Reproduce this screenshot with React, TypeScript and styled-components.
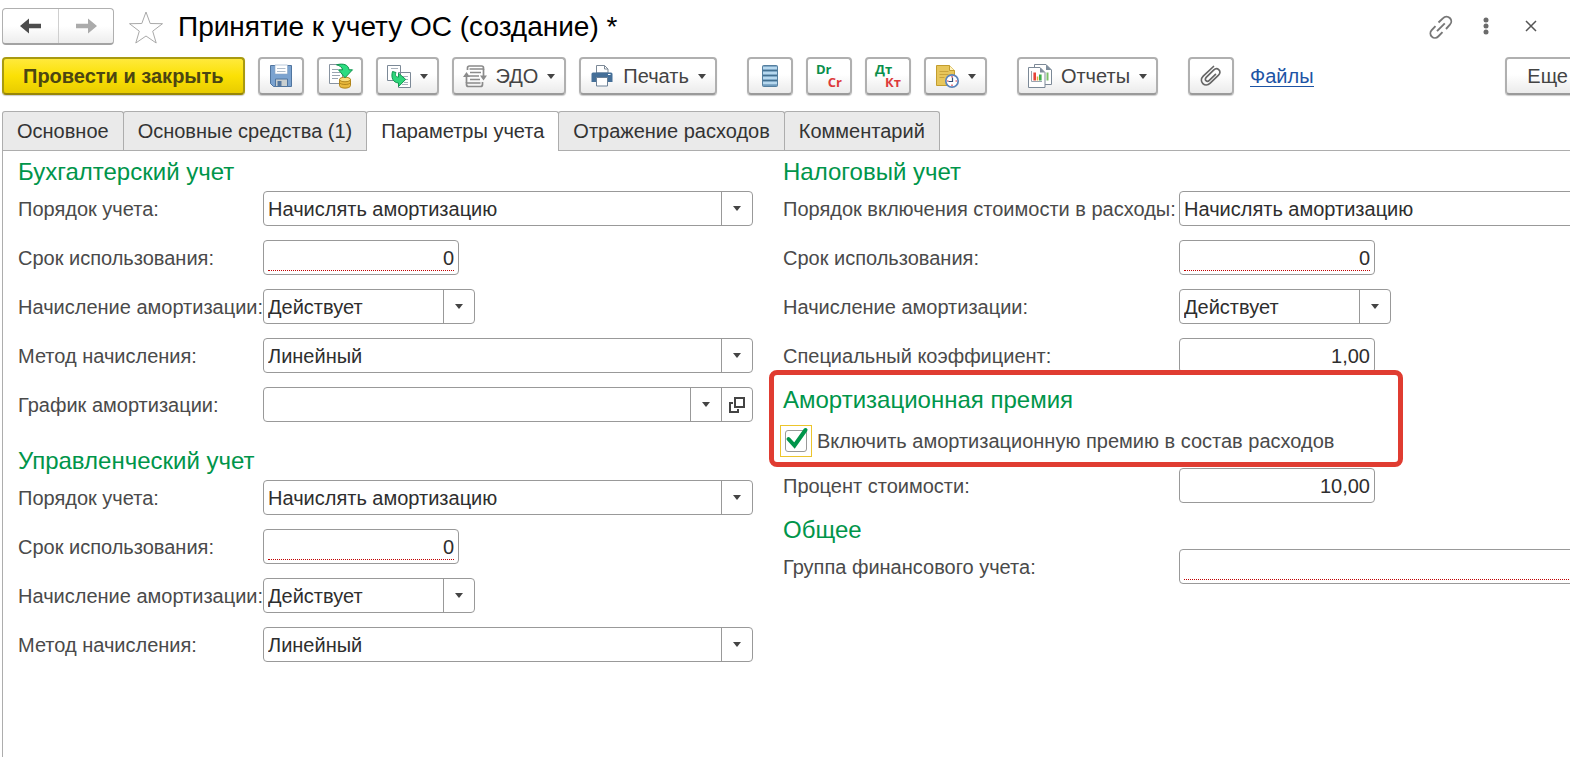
import React, { useState } from "react";
import styled, { createGlobalStyle } from "styled-components";

const GlobalStyle = createGlobalStyle`
  *, *::before, *::after { box-sizing: border-box; }
  body {
    margin: 0;
    background: #fff;
    overflow-x: hidden;
  }
  body, button, input, select {
    font-family: "Liberation Sans", Arial, sans-serif;
    font-size: 20px;
    line-height: 24px;
    color: #2e2e2e;
  }
`;

const Page = styled.div`
  display: flex;
  flex-direction: column;
  min-height: 100vh;
  padding: 8px 0 0 2px;
  overflow: hidden;
`;

/* ---------- title bar ---------- */

const TitleBar = styled.header`
  display: flex;
  align-items: center;
  height: 37px;
  padding-right: 17px;
`;

const NavGroup = styled.div`
  display: flex;
  height: 37px;
  border: 1px solid #b0b0b0;
  border-bottom: 2px solid #a3a3a3;
  border-radius: 4px;
  background: linear-gradient(#fff 50%, #ededed);
`;

const NavButton = styled.button`
  display: flex;
  align-items: center;
  justify-content: center;
  width: 55px;
  padding: 0;
  border: 0;
  background: none;

  & + & {
    border-left: 1px solid #cfcfcf;
  }
`;

const PlainButton = styled.button`
  display: flex;
  align-items: center;
  justify-content: center;
  width: 45px;
  height: 36px;
  padding: 0;
  border: 0;
  background: none;
`;

const StarButton = styled(PlainButton)`
  width: 36px;
  margin: 0 14px;
`;

const Title = styled.h1`
  flex: 1;
  margin: 0;
  font-size: 28px;
  line-height: 36px;
  font-weight: 400;
  color: #000;
  white-space: nowrap;
`;

const WindowTools = styled.div`
  display: flex;
`;

/* ---------- command bar ---------- */

const Toolbar = styled.div`
  display: flex;
  align-items: center;
  gap: 13px;
  margin: 12px -20px 0 0;
`;

const ToolGroup = styled.div`
  display: flex;
  align-items: center;
  gap: 13px;

  & + & {
    margin-left: 17px;
  }
`;

const ToolButton = styled.button<{ $square?: boolean }>`
  display: flex;
  align-items: center;
  justify-content: center;
  gap: 9px;
  height: 38px;
  width: ${(p) => (p.$square ? "46px" : "auto")};
  padding: ${(p) => (p.$square ? "0" : "0 9px")};
  border: 2px solid #b0b0b0;
  border-bottom-color: #9a9a9a;
  border-radius: 4px;
  background: linear-gradient(#fff 45%, #ebebeb);
  box-shadow: 0 1px 1px #ccc;
  color: #444;
  white-space: nowrap;
`;

const PrimaryButton = styled(ToolButton)`
  padding: 0 19px;
  border-color: #a89a10;
  border-bottom-color: #978608;
  background: linear-gradient(#ffe93b, #fbe105 50%, #e8cc00);
  color: #4c4612;
  font-weight: 700;
`;

const MoreButton = styled(ToolButton)`
  margin-left: auto;
  padding: 0 3px 0 20px;
`;

const FilesLink = styled.a`
  margin-left: 3px;
  color: #1d54a5;
  text-decoration: none;
  border-bottom: 1px solid #1d54a5;
  line-height: 20px;
`;

/* ---------- tabs ---------- */

const TabList = styled.div`
  display: flex;
  margin-top: 16px;
  border-bottom: 1px solid #adadad;
`;

const Tab = styled.button<{ $active?: boolean }>`
  height: ${(p) => (p.$active ? "40px" : "39px")};
  margin: 0 0 ${(p) => (p.$active ? "-1px" : "0")} -1px;
  padding: 0 14px ${(p) => (p.$active ? "1px" : "0")};
  border: 1px solid #adadad;
  border-bottom: 0;
  border-radius: 3px 3px 0 0;
  background: ${(p) => (p.$active ? "#fff" : "#eaeaea")};
  color: #333;
  white-space: nowrap;

  &:first-child {
    margin-left: 0;
  }
`;

/* ---------- form ---------- */

const Panel = styled.main`
  flex: 1;
  display: flex;
  gap: 30px;
  margin-right: -40px;
  padding: 6px 0 24px 15px;
  border-left: 1px solid #adadad;
`;

const Column = styled.div<{ $basis: number; $label: number }>`
  --label: ${(p) => p.$label}px;
  flex: 1 1 ${(p) => p.$basis}px;
  min-width: 0;
`;

const Section = styled.section<{ $gap?: number }>`
  display: flex;
  flex-direction: column;
  gap: 14px;
  margin-top: ${(p) => p.$gap ?? 0}px;
`;

const Heading = styled.h2`
  margin: 0 0 -10px;
  font-size: 24px;
  line-height: 30px;
  font-weight: 400;
  color: #00954a;
`;

const Row = styled.div`
  display: grid;
  grid-template-columns: var(--label) minmax(0, 1fr);
  align-items: center;
`;

const Label = styled.label`
  color: #4a4a4a;
  white-space: nowrap;
`;

const widths = { number: "196px", short: "212px", full: "100%" };

const FieldBox = styled.div<{ $size: keyof typeof widths }>`
  display: flex;
  width: ${(p) => widths[p.$size]};
  height: 35px;
  border: 1px solid #999;
  border-radius: 4px;
  background: #fff;
  overflow: hidden;
`;

const Select = styled.select`
  flex: 1;
  min-width: 0;
  padding: 0 4px;
  border: 0;
  appearance: none;
  background: none;
  outline: none;
`;

const TextInput = styled.input<{ $required?: boolean; $right?: boolean }>`
  flex: 1;
  min-width: 0;
  margin: 0 4px 3px;
  padding: 5px 0 0;
  border: 0;
  border-bottom: 1px ${(p) => (p.$required ? "dotted #c00000" : "solid transparent")};
  text-align: ${(p) => (p.$right ? "right" : "left")};
  background: none;
  outline: none;
`;

const FieldButton = styled.button`
  display: flex;
  align-items: center;
  justify-content: center;
  width: 31px;
  padding: 0;
  border: 0;
  border-left: 1px solid #999;
  background: none;
`;

const Premium = styled(Section)`
  position: relative;

  &::after {
    content: "";
    position: absolute;
    inset: -15px auto -10px -14px;
    width: 634px;
    border: 5px solid #e03c31;
    border-radius: 8px;
    pointer-events: none;
  }
`;

const CheckLabel = styled.label`
  display: flex;
  align-items: center;
  gap: 5px;
  margin: 6px 0 0 -3px;
  color: #4a4a4a;
  white-space: nowrap;
`;

const CheckFrame = styled.span`
  display: grid;
  place-items: center;
  width: 32px;
  height: 32px;
  border: 1px solid #ecc52c;

  & > * {
    grid-area: 1 / 1;
  }
  input:not(:checked) + svg {
    visibility: hidden;
  }
`;

const Checkbox = styled.input`
  width: 22px;
  height: 22px;
  margin: 0;
  appearance: none;
  border: 1px solid #999;
  border-radius: 3px;
  background: #fff;
`;

/* ---------- icons ---------- */

const Drawing = styled.svg`
  flex: none;
  overflow: visible;
`;

const Svg = ({ w = 24, h = 24, children }: { w?: number; h?: number; children: React.ReactNode }) => (
  <Drawing width={w} height={h} viewBox={`0 0 ${w} ${h}`} fill="none" aria-hidden="true">
    {children}
  </Drawing>
);

const Caret = () => (
  <Svg w={8} h={5}>
    <path d="M0 0h8L4 5z" fill="#444" />
  </Svg>
);

const ArrowIcon = ({ forward }: { forward?: boolean }) => (
  <Svg w={22} h={16}>
    {forward ? (
      <path d="M22 8 13 0.5V5.8H1v4.4h12v5.3z" fill="#ababab" />
    ) : (
      <path d="M0 8 9 0.5V5.8h12v4.4H9v5.3z" fill="#4d4d4d" />
    )}
  </Svg>
);

const StarIcon = () => (
  <Svg w={36} h={34}>
    <path d="M18 2l4.2 11.5 12.300.2-9.800 7.500 3.500 11.800L18 26 7.800 33l3.500-11.800L1.500 13.700l12.300-.2z" stroke="#a9a9a9" />
  </Svg>
);

const LinkIcon = () => (
  <Svg>
    <g stroke="#777" strokeWidth="1.9">
      <path d="M9.500 7.500l4.600-4.400a4.700 4.700 0 0 1 6.800 6.600l-3.900 4.300" />
      <path d="M6.500 11.200l-3.800 4a4.500 4.500 0 0 0 6.500 6.300l4.300-4.300" />
      <path d="M8 16.200l7.800-7.900" />
    </g>
  </Svg>
);

const DotsIcon = () => (
  <Svg w={6} h={18}>
    <circle cx="3" cy="2" r="2.5" fill="#6b6b6b" />
    <circle cx="3" cy="8" r="2.5" fill="#6b6b6b" />
    <circle cx="3" cy="14" r="2.5" fill="#6b6b6b" />
  </Svg>
);

const CloseIcon = () => (
  <Svg w={12} h={12}>
    <path d="M1 0l10 10M11 0L1 10" stroke="#555" strokeWidth="1.5" />
  </Svg>
);

const SaveIcon = () => (
  <Svg>
    <path d="M1.500 1.500h21v21H4.500l-3-3z" fill="#7ba3d0" stroke="#50759f" />
    <path d="M6 1h12.500v9H6z" fill="#fff" stroke="#8aa6c4" strokeWidth=".6" />
    <path d="M8 4.500h8.500M8 7.500h8.500" stroke="#aebccb" />
    <path d="M6.500 15h12v7.500h-12z" fill="#c9cfd0" stroke="#50759f" />
    <path d="M8.500 17h4v5h-4z" fill="#56789f" />
  </Svg>
);

const PostIcon = () => (
  <Svg w={26} h={26}>
    <path d="M2.500 1.500h13v19h-13z" fill="#fff" stroke="#8893a0" />
    <path d="M5 6.500h6M5 9.500h8M5 12.500h8M5 15.500h6" stroke="#9aa5b0" />
    <path d="M12.500 16.500v6c0 3.500 11 3.500 11 0v-6z" fill="#e9b93c" stroke="#b0841a" />
    <path d="M12.500 19.500c1 2.600 10 2.600 11 0" stroke="#b0841a" />
    <ellipse cx="18" cy="16.500" rx="5.500" ry="2.300" fill="#f8de7c" stroke="#b0841a" />
    <path d="M9.500 1.800c7-1.800 12 0 12.500 5h3.500l-7.500 8-6.500-8h4c-.3-2.600-2.500-4-6-5z" fill="#2bdc80" stroke="#11924e" />
  </Svg>
);

const CopyIcon = () => (
  <Svg>
    <path d="M.5 1.500h13v15H.5zM11.500 8.500h12v15h-12z" fill="#fff" stroke="#7c8997" />
    <path d="M4 4.500h7M15 12.500h6M17 15.500h4M17 18.500h4M15 20.500h6" stroke="#a8b1bb" />
    <path d="M5.500 7.500c-1.800 6.500.7 11 6 11.500v3.600l7.200-7.200-7.200-6.200v3.900c-3-.2-3.600-2-2.500-4.600z" fill="#2fd67b" stroke="#129550" strokeLinejoin="round" />
  </Svg>
);

const EdoIcon = () => (
  <Svg>
    <g stroke="#8b8b8b" strokeWidth="1.7">
      <path d="M4.500 6V4q0-2 2-2h12q2 0 2 2v1h-14" />
      <path d="M19.500 18v2.500q0 2-2 2h-12q-2 0-2-2V19h14" />
      <path d="M7 8.500h11M6 12h10M7 15.500h10" />
      <path d="M3.500 19v-7M20.500 5v8" />
    </g>
    <path d="M0 13l3.500-5L7 13zM17 11.500h7l-3.500 5z" fill="#8b8b8b" />
  </Svg>
);

const PrintIcon = () => (
  <Svg>
    <path d="M6.500 9V1.500h8l3.500 3.500v4z" fill="#fff" stroke="#7c8997" />
    <path d="M14.500 1.500V5H18" stroke="#7c8997" />
    <path d="M3 8.500h18q1.500 0 1.500 1.500v8h-21v-8q0-1.500 1.500-1.500z" fill="#456f98" />
    <path d="M18 10.500h2.500" stroke="#fff" />
    <path d="M6.500 13.500h11v8.500h-11z" fill="#fff" stroke="#6c8197" />
  </Svg>
);

const ListIcon = () => (
  <Svg w={16} h={22}>
    <rect x=".5" y=".5" width="15" height="21" rx="1" fill="#6f9bbd" stroke="#557f9f" />
    <path d="M1 3h14M1 8h14M1 13h14M1 18h14" stroke="#b7d8ee" strokeWidth="2.500" />
    <path d="M1 5.500h14M1 10.500h14M1 15.500h14" stroke="#44708f" />
  </Svg>
);

const PairIcon = ({ top, bottom }: { top: string; bottom: string }) => (
  <Svg w={26} h={26}>
    <g fontFamily="'Open Sans', sans-serif" fontWeight="700" fontSize="13">
      <text x="0" y="11" fill="#0a8f4c">{top}</text>
      <text x="26" y="24" fill="#dd3a3a" textAnchor="end">{bottom}</text>
    </g>
  </Svg>
);

const ScheduleIcon = () => (
  <Svg>
    <path d="M1.500 1.500h13l5 5v15h-18z" fill="#e7c65b" stroke="#c39d2e" />
    <path d="M14.500 1.500v5h5" fill="#fff3c0" stroke="#c39d2e" />
    <path d="M4.500 7.500h9M4.500 10.500h9M4.500 13.500h5" stroke="#c9a43c" />
    <circle cx="17" cy="17" r="6.200" fill="#fff" stroke="#5a83bb" strokeWidth="1.700" />
    <path d="M17 12v1.500M17 20.500V22M12 17h1.500M20.500 17H22" stroke="#d34" strokeWidth="1.200" />
    <path d="M17.500 13.500V17.500H13.500" stroke="#334f78" strokeWidth="1.200" />
  </Svg>
);

const ReportsIcon = () => (
  <Svg>
    <path d="M6.500.5h11.500l5.500 5.500v14.500h-17z" fill="#fff" stroke="#7c8997" />
    <path d="M18 .5V6h5.500z" fill="#7f8e9d" />
    <path d="M19.500 8.500v8" stroke="#7bbf6a" strokeWidth="2" />
    <path d="M.5 3.500h11.500l5 5v15H.5z" fill="#fff" stroke="#7c8997" />
    <path d="M12 3.500v5h5z" fill="#7f8e9d" />
    <path d="M3.500 7v10.500H14" stroke="#9aa5b0" />
    <path d="M6.700 8.500v8" stroke="#e5443a" strokeWidth="2.600" />
    <path d="M12.300 10.500v6" stroke="#3eb04d" strokeWidth="2.600" />
    <path d="M9.500 12.500v4" stroke="#f0a63c" strokeWidth="1.500" />
  </Svg>
);

const ClipIcon = () => (
  <Svg w={22} h={22}>
    <path
      d="M13.500 1.500L3.200 11.200c-5 5.200 1.800 12 7 7l8.300-8c4-4.200-1.300-8.600-4.900-5.100l-7.400 7.200c-2.400 2.600.8 5.300 3.100 3.100l6.200-6"
      stroke="#666"
      strokeWidth="1.700"
      strokeLinecap="round"
    />
  </Svg>
);

const OpenIcon = () => (
  <Svg w={16} h={16}>
    <path d="M6 1h9v9H6z" stroke="#444" strokeWidth="2" />
    <path d="M4 6H1v9h8v-3" stroke="#444" strokeWidth="2" />
  </Svg>
);

const CheckIcon = () => (
  <Svg>
    <path d="M4.500 10l6 6.500L21.500 1" stroke="#00954a" strokeWidth="4" strokeLinecap="round" />
  </Svg>
);

/* ---------- fields ---------- */

type FieldProps = { id: string; label: string; value?: string };

const SelectField = ({ id, label, value = "", size = "full", openable }: FieldProps & { size?: "short" | "full"; openable?: boolean }) => (
  <Row>
    <Label htmlFor={id}>{label}</Label>
    <FieldBox $size={size}>
      <Select id={id} defaultValue={value}>
        <option value={value}>{value}</option>
      </Select>
      <FieldButton type="button" aria-label="Выбрать">
        <Caret />
      </FieldButton>
      {openable && (
        <FieldButton type="button" aria-label="Открыть">
          <OpenIcon />
        </FieldButton>
      )}
    </FieldBox>
  </Row>
);

const NumberField = ({ id, label, value, required }: FieldProps & { required?: boolean }) => (
  <Row>
    <Label htmlFor={id}>{label}</Label>
    <FieldBox $size="number">
      <TextInput id={id} inputMode="decimal" defaultValue={value} $required={required} $right />
    </FieldBox>
  </Row>
);

const tabs = ["Основное", "Основные средства (1)", "Параметры учета", "Отражение расходов", "Комментарий"];

export default function App() {
  const [active, setActive] = useState(2);

  return (
    <Page>
      <GlobalStyle />
      <TitleBar>
        <NavGroup>
          <NavButton type="button" aria-label="Назад"><ArrowIcon /></NavButton>
          <NavButton type="button" aria-label="Вперед"><ArrowIcon forward /></NavButton>
        </NavGroup>
        <StarButton type="button" aria-label="В избранное"><StarIcon /></StarButton>
        <Title>Принятие к учету ОС (создание) *</Title>
        <WindowTools>
          <PlainButton type="button" aria-label="Получить ссылку"><LinkIcon /></PlainButton>
          <PlainButton type="button" aria-label="Меню"><DotsIcon /></PlainButton>
          <PlainButton type="button" aria-label="Закрыть"><CloseIcon /></PlainButton>
        </WindowTools>
      </TitleBar>

      <Toolbar>
        <ToolGroup>
          <PrimaryButton type="button">Провести и закрыть</PrimaryButton>
          <ToolButton type="button" $square aria-label="Записать"><SaveIcon /></ToolButton>
          <ToolButton type="button" $square aria-label="Провести"><PostIcon /></ToolButton>
          <ToolButton type="button" aria-label="Создать на основании"><CopyIcon /><Caret /></ToolButton>
          <ToolButton type="button"><EdoIcon />ЭДО<Caret /></ToolButton>
          <ToolButton type="button"><PrintIcon />Печать<Caret /></ToolButton>
        </ToolGroup>
        <ToolGroup>
          <ToolButton type="button" $square aria-label="Реестр"><ListIcon /></ToolButton>
          <ToolButton type="button" $square><PairIcon top="Dr" bottom="Cr" /></ToolButton>
          <ToolButton type="button" $square><PairIcon top="Дт" bottom="Кт" /></ToolButton>
          <ToolButton type="button" aria-label="Задачи"><ScheduleIcon /><Caret /></ToolButton>
        </ToolGroup>
        <ToolGroup>
          <ToolButton type="button"><ReportsIcon />Отчеты<Caret /></ToolButton>
        </ToolGroup>
        <ToolGroup>
          <ToolButton type="button" $square aria-label="Прикрепить"><ClipIcon /></ToolButton>
          <FilesLink href="#files">Файлы</FilesLink>
        </ToolGroup>
        <MoreButton type="button">Еще<Caret /></MoreButton>
      </Toolbar>

      <TabList role="tablist">
        {tabs.map((name, i) => (
          <Tab key={name} type="button" role="tab" aria-selected={i === active} $active={i === active} onClick={() => setActive(i)}>
            {name}
          </Tab>
        ))}
      </TabList>

      <Panel>
        <Column $basis={735} $label={245}>
          <Section>
            <Heading>Бухгалтерский учет</Heading>
            <SelectField id="acc-order" label="Порядок учета:" value="Начислять амортизацию" />
            <NumberField id="acc-term" label="Срок использования:" value="0" required />
            <SelectField id="acc-accrual" label="Начисление амортизации:" value="Действует" size="short" />
            <SelectField id="acc-method" label="Метод начисления:" value="Линейный" />
            <SelectField id="acc-schedule" label="График амортизации:" openable />
          </Section>
          <Section $gap={24}>
            <Heading>Управленческий учет</Heading>
            <SelectField id="mgmt-order" label="Порядок учета:" value="Начислять амортизацию" />
            <NumberField id="mgmt-term" label="Срок использования:" value="0" required />
            <SelectField id="mgmt-accrual" label="Начисление амортизации:" value="Действует" size="short" />
            <SelectField id="mgmt-method" label="Метод начисления:" value="Линейный" />
          </Section>
        </Column>

        <Column $basis={827} $label={396}>
          <Section>
            <Heading>Налоговый учет</Heading>
            <SelectField id="tax-order" label="Порядок включения стоимости в расходы:" value="Начислять амортизацию" />
            <NumberField id="tax-term" label="Срок использования:" value="0" required />
            <SelectField id="tax-accrual" label="Начисление амортизации:" value="Действует" size="short" />
            <NumberField id="tax-factor" label="Специальный коэффициент:" value="1,00" />
          </Section>
          <Premium $gap={12}>
            <Heading>Амортизационная премия</Heading>
            <CheckLabel>
              <CheckFrame>
                <Checkbox type="checkbox" defaultChecked />
                <CheckIcon />
              </CheckFrame>
              Включить амортизационную премию в состав расходов
            </CheckLabel>
          </Premium>
          <Section $gap={11}>
            <NumberField id="premium-rate" label="Процент стоимости:" value="10,00" />
          </Section>
          <Section $gap={12}>
            <Heading>Общее</Heading>
            <Row>
              <Label htmlFor="fin-group">Группа финансового учета:</Label>
              <FieldBox $size="full">
                <TextInput id="fin-group" $required />
              </FieldBox>
            </Row>
          </Section>
        </Column>
      </Panel>
    </Page>
  );
}
